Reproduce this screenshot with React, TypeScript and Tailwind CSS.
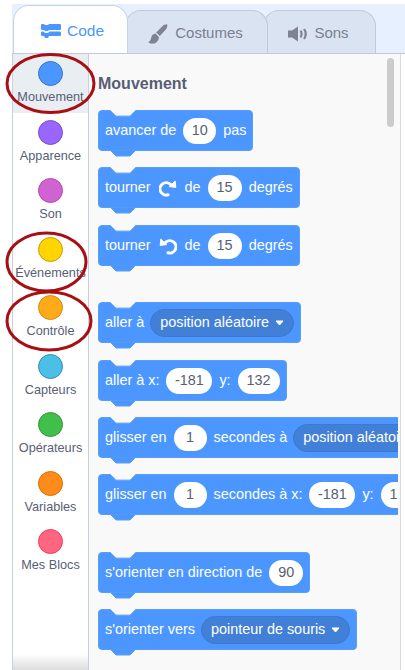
import React from 'react';

const categories = [
  { name: 'Mouvement', fill: 'bg-[#4c97ff]', ring: 'border-[#3373cc]', active: true },
  { name: 'Apparence', fill: 'bg-[#9966ff]', ring: 'border-[#774dcb]' },
  { name: 'Son', fill: 'bg-[#cf63cf]', ring: 'border-[#bd42bd]' },
  { name: 'Événements', fill: 'bg-[#ffd500]', ring: 'border-[#cc9900]' },
  { name: 'Contrôle', fill: 'bg-[#ffab19]', ring: 'border-[#cf8b17]' },
  { name: 'Capteurs', fill: 'bg-[#4cbfe6]', ring: 'border-[#2e8eb8]' },
  { name: 'Opérateurs', fill: 'bg-[#40bf4a]', ring: 'border-[#389438]' },
  { name: 'Variables', fill: 'bg-[#ff8c1a]', ring: 'border-[#db6e00]' },
  { name: 'Mes Blocs', fill: 'bg-[#ff6680]', ring: 'border-[#ff3355]' },
];

function Num({ children, w }: { children: React.ReactNode; w: string }) {
  return (
    <span className={`flex h-[26px] shrink-0 items-center justify-center rounded-full bg-white text-[#575e75] ${w}`}>
      {children}
    </span>
  );
}

function Drop({ children }: { children: React.ReactNode }) {
  return (
    <span className="-ml-[1px] flex h-[28px] shrink-0 items-center gap-[6px] rounded-full border border-[#3d79cc] bg-[#4280d7] pl-[9px] pr-[9px] text-white">
      {children}
      <svg width="9" height="6" viewBox="0 0 9 6">
        <path d="M1 1 H8 L4.5 5 Z" fill="#fff" stroke="#fff" strokeWidth="1" strokeLinejoin="round" />
      </svg>
    </span>
  );
}

function Block({ children, className = '' }: { children: React.ReactNode; className?: string }) {
  return (
    <div
      className={`relative flex h-[41px] w-max shrink-0 items-center gap-[7px] whitespace-nowrap rounded-[4px] border border-[#5a9ff5] bg-[#4c97ff] px-[6px] pt-[1px] text-[14.4px] text-white ${className}`}
    >
      <svg className="absolute left-[11px] top-[-1px]" width="27" height="7" viewBox="0 0 27 7">
        <path d="M0 0 L6 6 H20 L26 0 Z" fill="#f9f9f9" />
        <path d="M0 0 L6 6 H20 L26 0" fill="none" stroke="#7fb2f5" strokeWidth="1" />
      </svg>
      <svg className="absolute bottom-[-7px] left-[11px]" width="27" height="7" viewBox="0 0 27 7">
        <path d="M0 0 L6 6 H20 L26 0 Z" fill="#4c97ff" stroke="#5a9ff5" strokeWidth="1" strokeLinejoin="round" />
      </svg>
      {children}
    </div>
  );
}

function TurnIcon({ flip }: { flip?: boolean }) {
  return (
    <svg width="18" height="18" viewBox="0 0 18 18" className={`mx-[1px] ${flip ? '-scale-x-100' : ''}`}>
      <path d="M11.5 5.4 A6.2 6.2 0 1 0 9 15.8" fill="none" stroke="#fff" strokeWidth="3" strokeLinecap="round" />
      <path d="M10.4 7.6 L16.8 8.4 L16.2 2 Z" fill="#fff" stroke="#fff" strokeWidth="1" strokeLinejoin="round" />
    </svg>
  );
}

export default function App() {
  return (
    <div className="relative flex h-[670px] w-[405px] flex-col overflow-hidden bg-white pt-[4px] font-['Liberation_Sans',Arial,sans-serif]">
      <div className="ml-[12px] flex h-[49px] shrink-0 items-end bg-[#e6f0ff] pl-[1px]">
        <div className="relative z-20 flex h-[48px] w-[115px] items-center justify-center gap-[6px] rounded-t-[16px] border border-b-0 border-[#c8d3e6] bg-white pl-[4px] pt-[3px] text-[15.5px] text-[#4c97ff]">
          <svg width="20" height="14" viewBox="0 0 20 14">
            <path d="M0 1 Q0 0 1 0 H3 L4 1 H7 L8 0 H19 Q20 0 20 1 V5 Q20 6 19 6 H8 L7 7 H4 L3 6 H1 Q0 6 0 5 Z" fill="#4c97ff" />
            <path d="M0 8.5 Q0 7.5 1 7.5 H2.5 L4 9 H7 L8.5 7.5 H19 Q20 7.5 20 8.5 V11 Q20 12 19 12 H8 L7 14 H4 L3 12 H1 Q0 12 0 11 Z" fill="#4c97ff" />
          </svg>
          Code
        </div>
        <div className="z-10 -ml-[3px] flex h-[43px] w-[143px] items-center justify-center gap-[7px] rounded-t-[16px] border border-b-0 border-[#c1cadb] bg-[#d9e3f2] pr-[2px] pt-[3px] text-[15px] text-[#7b7f8e]">
          <svg width="20" height="20" viewBox="0 0 20 20">
            <path d="M18.8 0.3 C19.8 1 19.2 3.4 17.8 5.6 L11.8 12 L8.2 8.6 L14.6 2 C16.2 0.6 18 -0.2 18.8 0.3 Z" fill="#7f8290" />
            <path d="M7.4 9.6 L10.9 12.9 C11 16 8.6 19.2 5 19.6 C3 19.8 1 19.2 0.2 18 C2.2 17.6 2.6 15.8 3.2 13.8 C3.8 11.4 5.4 9.8 7.4 9.6 Z" fill="#7f8290" />
          </svg>
          Costumes
        </div>
        <div className="-ml-[5px] flex h-[43px] w-[113px] items-center justify-center gap-[6px] rounded-t-[16px] border border-b-0 border-[#c1cadb] bg-[#d9e3f2] pr-[2px] pt-[3px] text-[15px] text-[#7b7f8e]">
          <svg width="20" height="16" viewBox="0 0 20 16">
            <path d="M0 4.5 H4 L10 0.5 V15.5 L4 11.5 H0 Z" fill="#7f8290" />
            <path d="M13 5.5 Q14.4 8 13 10.5" fill="none" stroke="#7f8290" strokeWidth="2.2" strokeLinecap="round" />
            <path d="M16.5 3.8 Q19 8 16.5 12.2" fill="none" stroke="#7f8290" strokeWidth="2.2" strokeLinecap="round" />
          </svg>
          Sons
        </div>
      </div>

      <div className="ml-[12px] flex min-h-0 flex-1 border-t border-[#c1cadb]">
        <div className="relative flex w-[77px] shrink-0 flex-col border-x border-[#c8d0e0] bg-white">
          {categories.map((c) => (
            <div
              key={c.name}
              className={`flex h-[58.5px] shrink-0 flex-col items-center pt-[7px] text-[12.7px] leading-[14px] text-[#575e75] ${c.active ? 'bg-[#e9eef2]' : ''}`}
            >
              <span className={`h-[25px] w-[25px] rounded-full border ${c.fill} ${c.ring}`} />
              <span className="mt-[4px] whitespace-nowrap">{c.name}</span>
            </div>
          ))}
          <div className="absolute bottom-0 left-0 h-[16px] w-[75px] bg-gradient-to-b from-white to-[#dcdcdc]" />
        </div>

        <div className="relative w-[312px] shrink-0 border-r border-[#d9d9d9] bg-[#f9f9f9] pl-[9px] pr-[2px]">
          <div className="flex h-full flex-col overflow-hidden">
            <h2 className="mt-[21px] h-[17px] text-[16px] font-bold leading-[17px] text-[#575e75]">Mouvement</h2>
            <Block className="mt-[18px]">
              avancer de <Num w="w-[33px]">10</Num> pas
            </Block>
            <Block className="mt-[16px]">
              tourner <TurnIcon /> de <Num w="w-[34px]">15</Num> degrés
            </Block>
            <Block className="mt-[17px]">
              tourner <TurnIcon flip /> de <Num w="w-[34px]">15</Num> degrés
            </Block>
            <Block className="mt-[36px]">
              aller à <Drop>position aléatoire</Drop>
            </Block>
            <Block className="mt-[17px]">
              aller à x: <Num w="w-[46px]">-181</Num> y: <Num w="w-[42px]">132</Num>
            </Block>
            <Block className="mt-[16px]">
              glisser en <Num w="w-[33px]">1</Num> secondes à <Drop>position aléatoire</Drop>
            </Block>
            <Block className="mt-[16px]">
              glisser en <Num w="w-[33px]">1</Num> secondes à x: <Num w="w-[46px]">-181</Num> y: <Num w="w-[42px]">132</Num>
            </Block>
            <Block className="mt-[37px]">
              s'orienter en direction de <Num w="w-[34px]">90</Num>
            </Block>
            <Block className="mt-[16px]">
              s'orienter vers <Drop>pointeur de souris</Drop>
            </Block>
          </div>
          <div className="absolute right-[6px] top-[4px] h-[69px] w-[7px] rounded-full bg-[#cccccc]" />
        </div>
      </div>

      {/* annotations rouges */}
      <svg className="pointer-events-none absolute left-0 top-0 z-30" width="405" height="670" viewBox="0 0 405 670">
        <g fill="none" stroke="#a70f14" strokeWidth="3">
          <ellipse cx="50.5" cy="83.5" rx="43.5" ry="29" />
          <ellipse cx="46.5" cy="262" rx="39.5" ry="29" />
          <ellipse cx="49" cy="321" rx="42" ry="29" />
        </g>
      </svg>
    </div>
  );
}
